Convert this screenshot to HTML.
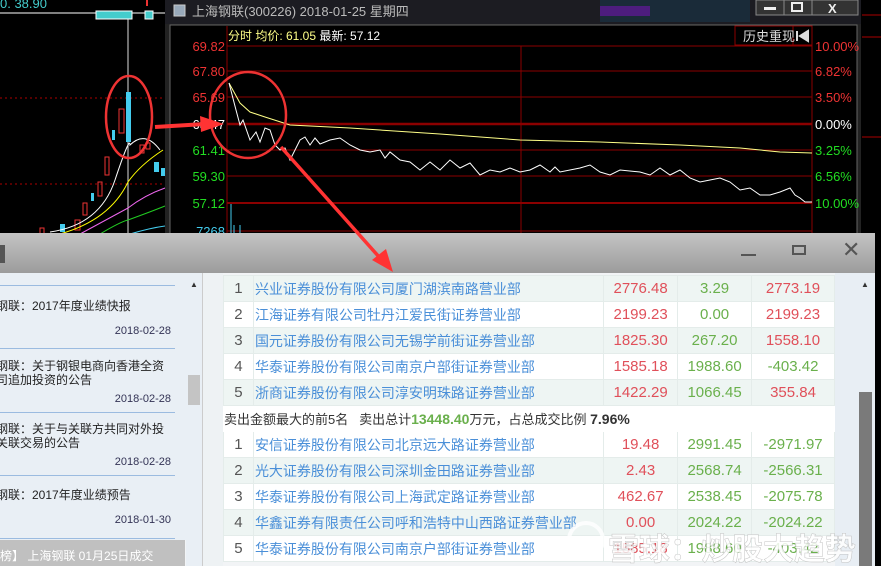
<!DOCTYPE html>
<html><head><meta charset="utf-8"><style>
*{margin:0;padding:0;box-sizing:border-box}
body{width:881px;height:566px;overflow:hidden;background:#000;position:relative;font-family:"Liberation Sans","Noto Sans CJK SC",sans-serif}
.abs{position:absolute}
table{border-collapse:collapse;position:absolute;left:223px;top:275px;width:612px;font-size:14px}
td{height:26px;border:1px solid #e4ecea;padding:0}
tr.o td{background:#eef5f3}
tr.e td{background:#fff}
td.n{width:30px;text-align:center;color:#555;font-size:15px}
td.c{width:351px;color:#4a8fd8;padding-left:1px}
td.a,td.b,td.d{width:74px;text-align:center;font-size:15px}
td.d{width:83px}
.r{color:#e0505a}.g{color:#6ab04c}
.news{position:absolute;left:-4px;width:179px;font-size:12px;color:#222}
.dt{position:absolute;right:4px;font-size:11px;color:#335}
</style></head><body>
<svg class="abs" style="left:0;top:0" width="881" height="240">
<line x1="0" y1="13" x2="165" y2="13" stroke="#fff" stroke-width="1"/>
<line x1="0" y1="98" x2="165" y2="98" stroke="#a00" stroke-dasharray="2,3"/>
<line x1="0" y1="184" x2="165" y2="184" stroke="#a00" stroke-dasharray="2,3"/>
<line x1="128" y1="14" x2="128" y2="235" stroke="#ddd"/>
<rect x="96" y="11" width="36" height="8" fill="#4cc" stroke="#fff"/>
<rect x="145" y="11" width="8" height="8" fill="#4cc" stroke="#fff"/>
<text x="0" y="8" fill="#4cc" font-size="13">0. 38.90</text>
<rect x="146" y="0" width="2" height="6" fill="#e33"/>
<rect x="119" y="109" width="5" height="24" fill="none" stroke="#e33"/>
<rect x="126" y="92" width="5" height="50" fill="#4ce"/>
<rect x="112" y="130" width="3" height="10" fill="#4ce"/>
<rect x="105" y="157" width="4" height="18" fill="none" stroke="#e33"/>
<rect x="98" y="182" width="4" height="14" fill="none" stroke="#e33"/>
<rect x="91" y="193" width="3" height="8" fill="#4ce"/>
<rect x="83" y="203" width="4" height="12" fill="none" stroke="#e33"/>
<rect x="154" y="162" width="5" height="10" fill="#4ce"/>
<rect x="161" y="168" width="4" height="8" fill="#4ce"/>
<rect x="140" y="145" width="4" height="8" fill="none" stroke="#e33"/>
<rect x="146" y="143" width="4" height="6" fill="none" stroke="#e33"/>
<rect x="60" y="224" width="5" height="8" fill="#4ce"/>
<rect x="75" y="220" width="5" height="10" fill="none" stroke="#e33"/>
<rect x="40" y="228" width="4" height="6" fill="none" stroke="#e33"/>
<path d="M50 232 Q100 225 115 180 T130 145 Q145 130 160 150" stroke="#fff" fill="none"/>
<path d="M60 234 Q110 220 128 182 Q140 165 163 150" stroke="#ff0" fill="none"/>
<path d="M80 234 Q115 215 128 208 Q145 195 165 188" stroke="#e6e" fill="none"/>
<path d="M100 234 Q120 222 128 220 Q150 212 165 206" stroke="#2c2" fill="none"/>
<path d="M130 234 Q150 228 165 226" stroke="#4ce" fill="none"/>
<rect x="165" y="0" width="696" height="240" fill="#222"/>
<rect x="165" y="0" width="696" height="24" fill="#1c1c22"/>
<rect x="600" y="0" width="150" height="22" fill="#1a3040" opacity=".8"/>
<rect x="600" y="6" width="50" height="10" fill="#5a1a90" opacity=".8"/>
<rect x="174" y="5" width="11" height="11" fill="#9ab" stroke="#ccc"/>
<text x="192" y="16" fill="#bbb" font-size="13">上海钢联(300226) 2018-01-25 星期四</text>
<rect x="756" y="0" width="28" height="15" fill="#333" stroke="#888"/>
<rect x="784" y="0" width="28" height="15" fill="#333" stroke="#888"/>
<rect x="812" y="0" width="46" height="15" fill="#333" stroke="#888"/>
<rect x="764" y="7" width="12" height="3" fill="#eee"/>
<rect x="792" y="3" width="10" height="8" fill="none" stroke="#eee" stroke-width="2"/>
<text x="828" y="13" fill="#eee" font-size="13" font-weight="bold">X</text>
<rect x="170" y="25" width="687" height="215" fill="#000" stroke="#666"/>
<g stroke="#8b0000" stroke-width="1">
<line x1="227" y1="46" x2="812" y2="46"/><line x1="227" y1="71" x2="812" y2="71"/>
<line x1="227" y1="97" x2="812" y2="97"/><line x1="227" y1="150" x2="812" y2="150"/>
<line x1="227" y1="176" x2="812" y2="176"/><line x1="227" y1="231" x2="812" y2="231"/>
<line x1="227" y1="124" x2="812" y2="124" stroke-width="2.5"/>
<line x1="227" y1="203" x2="812" y2="203" stroke-width="2"/>
<line x1="227" y1="26" x2="227" y2="240"/><line x1="521" y1="46" x2="521" y2="240"/>
<line x1="812" y1="26" x2="812" y2="240"/>
<rect x="735" y="26" width="58" height="19" fill="none"/><rect x="793" y="26" width="19" height="19" fill="none"/>
</g>
<text x="743" y="41" fill="#ddd" font-size="13">历史重现</text>
<path d="M797 31v10M808 31l-8 5 8 5z" stroke="#ddd" fill="#ddd" stroke-width="2"/>
<text x="228" y="40" fill="#ff8" font-size="12">分时 均价: 61.05 <tspan fill="#fff">最新: 57.12</tspan></text>
<g font-size="13" text-anchor="end">
<text x="225" y="51" fill="#e33">69.82</text><text x="225" y="76" fill="#e33">67.80</text>
<text x="225" y="102" fill="#e33">65.69</text><text x="225" y="129" fill="#fff">63.47</text>
<text x="225" y="155" fill="#2d2">61.41</text><text x="225" y="181" fill="#2d2">59.30</text>
<text x="225" y="208" fill="#2d2">57.12</text><text x="225" y="236" fill="#4ce">7268</text>
</g>
<g font-size="13">
<text x="815" y="51" fill="#e33">10.00%</text><text x="815" y="76" fill="#e33">6.82%</text>
<text x="815" y="102" fill="#e33">3.50%</text><text x="815" y="129" fill="#fff">0.00%</text>
<text x="815" y="155" fill="#2d2">3.25%</text><text x="815" y="181" fill="#2d2">6.56%</text>
<text x="815" y="208" fill="#2d2">10.00%</text>
</g>
<line x1="231" y1="204" x2="231" y2="235" stroke="#4ce"/><line x1="234" y1="225" x2="234" y2="235" stroke="#4ce"/><line x1="240" y1="225" x2="240" y2="235" stroke="#4ce"/>
<polyline fill="none" stroke="#ff8" points="229,83 240,103 250,112 265,117 290,125 350,128 440,134 520,140 600,142 680,145 740,148 780,152 812,153"/>
<polyline fill="none" stroke="#fff" points="229,83 236,110 240,125 243,120 250,140 256,132 260,142 265,128 270,130 275,145 280,150 285,148 290,160 295,150 300,140 305,137 310,145 315,138 320,144 330,140 340,138 350,145 360,150 370,152 380,150 385,158 390,152 400,160 410,162 420,170 430,162 440,170 450,160 460,168 470,163 480,175 490,170 500,172 510,168 520,172 530,170 540,165 550,172 555,167 560,172 580,168 590,165 600,172 610,175 620,170 640,172 650,175 660,168 670,175 680,170 690,178 700,182 710,180 720,178 730,182 740,190 750,188 760,195 770,195 780,192 790,188 795,195 800,198 805,202 812,202"/>
<rect x="861" y="0" width="20" height="240" fill="#000"/>
<line x1="862" y1="15" x2="881" y2="15" stroke="#a00"/><line x1="862" y1="37" x2="881" y2="37" stroke="#a00"/><line x1="862" y1="137" x2="881" y2="137" stroke="#a00"/>
</svg>
<div class="abs" style="left:0;top:233px;width:875px;height:333px;background:#f2f4f6"></div>
<div class="abs" style="left:0;top:233px;width:875px;height:40px;background:linear-gradient(#c4c4c4,#9c9c9c)"></div>
<div class="abs" style="left:0;top:245px;width:5px;height:18px;background:#555"></div>
<div class="abs" style="left:741px;top:254px;width:15px;height:2px;background:#555"></div>
<div class="abs" style="left:792px;top:245px;width:14px;height:10px;border:2px solid #555"></div>
<div class="abs" style="left:842px;top:237px;color:#555;font-size:22px">✕</div>
<div class="abs" style="left:0;top:273px;width:186px;height:267px;background:#e9eff5"></div>
<div class="abs" style="left:186px;top:273px;width:16px;height:293px;background:#e9eff5"></div>
<div class="abs" style="left:188px;top:375px;width:12px;height:30px;background:#c4c4c4"></div>
<div class="abs" style="left:190px;top:280px;color:#333;font-size:8px">▲</div>
<div class="abs" style="left:202px;top:273px;width:21px;height:293px;background:#eef2f4;border-left:1px solid #ccc"></div>
<div class="abs" style="left:0;top:285px;width:175px;height:1px;background:#9bbbe0"></div>
<div class="abs" style="left:0;top:348px;width:175px;height:1px;background:#9bbbe0"></div>
<div class="abs" style="left:0;top:412px;width:175px;height:1px;background:#9bbbe0"></div>
<div class="abs" style="left:0;top:475px;width:175px;height:1px;background:#9bbbe0"></div>
<div class="abs" style="left:0;top:538px;width:175px;height:1px;background:#9bbbe0"></div>
<div class="news" style="top:297px">钢联：2017年度业绩快报<span class="dt" style="top:28px">2018-02-28</span></div>
<div class="news" style="top:359px;line-height:14px">钢联：关于钢银电商向香港全资<br>司追加投资的公告<span class="dt" style="top:33px">2018-02-28</span></div>
<div class="news" style="top:422px;line-height:14px">钢联：关于与关联方共同对外投<br>关联交易的公告<span class="dt" style="top:33px">2018-02-28</span></div>
<div class="news" style="top:486px">钢联：2017年度业绩预告<span class="dt" style="top:28px">2018-01-30</span></div>
<div class="abs" style="left:0;top:540px;width:185px;height:26px;background:#c0c0c0;color:#fff;font-size:12px;padding:7px 0 0 0">榜】 上海钢联 01月25日成交</div>
<div class="abs" style="left:835px;top:273px;width:40px;height:293px;background:#e8eef4"></div>
<div class="abs" style="left:859px;top:392px;width:13px;height:174px;background:#7a7a7a"></div>
<div class="abs" style="left:861px;top:280px;color:#333;font-size:8px">▲</div>
<div class="abs" style="left:875px;top:233px;width:6px;height:333px;background:#000"></div>
<table>
<tr class="o"><td class="n">1</td><td class="c">兴业证券股份有限公司厦门湖滨南路营业部</td><td class="a r">2776.48</td><td class="b g">3.29</td><td class="d r">2773.19</td></tr>
<tr class="e"><td class="n">2</td><td class="c">江海证券有限公司牡丹江爱民街证券营业部</td><td class="a r">2199.23</td><td class="b g">0.00</td><td class="d r">2199.23</td></tr>
<tr class="o"><td class="n">3</td><td class="c">国元证券股份有限公司无锡学前街证券营业部</td><td class="a r">1825.30</td><td class="b g">267.20</td><td class="d r">1558.10</td></tr>
<tr class="e"><td class="n">4</td><td class="c">华泰证券股份有限公司南京户部街证券营业部</td><td class="a r">1585.18</td><td class="b g">1988.60</td><td class="d g">-403.42</td></tr>
<tr class="o"><td class="n">5</td><td class="c">浙商证券股份有限公司淳安明珠路证券营业部</td><td class="a r">1422.29</td><td class="b g">1066.45</td><td class="d r">355.84</td></tr>
<tr class="e"><td colspan="5" style="color:#333;font-size:13px;border-color:#fff">卖出金额最大的前5名 &nbsp; 卖出总计<b class="g" style="font-size:14px">13448.40</b>万元，占总成交比例 <b style="font-size:14px">7.96%</b></td></tr>
<tr class="e"><td class="n">1</td><td class="c">安信证券股份有限公司北京远大路证券营业部</td><td class="a r">19.48</td><td class="b g">2991.45</td><td class="d g">-2971.97</td></tr>
<tr class="o"><td class="n">2</td><td class="c">光大证券股份有限公司深圳金田路证券营业部</td><td class="a r">2.43</td><td class="b g">2568.74</td><td class="d g">-2566.31</td></tr>
<tr class="e"><td class="n">3</td><td class="c">华泰证券股份有限公司上海武定路证券营业部</td><td class="a r">462.67</td><td class="b g">2538.45</td><td class="d g">-2075.78</td></tr>
<tr class="o"><td class="n">4</td><td class="c">华鑫证券有限责任公司呼和浩特中山西路证券营业部</td><td class="a r">0.00</td><td class="b g">2024.22</td><td class="d g">-2024.22</td></tr>
<tr class="e"><td class="n">5</td><td class="c">华泰证券股份有限公司南京户部街证券营业部</td><td class="a r">1585.18</td><td class="b g">1988.60</td><td class="d g">-403.42</td></tr>
</table>
<svg class="abs" style="left:0;top:0" width="881" height="566">
<ellipse cx="129" cy="117" rx="23" ry="41" fill="none" stroke="#e33" stroke-width="2.5"/>
<ellipse cx="248" cy="115" rx="38" ry="43" fill="none" stroke="#e33" stroke-width="2.5"/>
<path d="M155 127 L205 124" stroke="#f33" stroke-width="4"/>
<path d="M200 116 L224 124 L201 132z" fill="#f33"/>
<path d="M281 147 L380 258" stroke="#f33" stroke-width="3.5"/>
<path d="M372 260 L393 272 L386 249z" fill="#f33"/>
<g opacity=".85">
<circle cx="586" cy="540" r="17" fill="none" stroke="#fff" stroke-width="4"/>
<text x="608" y="560" fill="#fff" font-size="31" font-weight="bold" stroke="#bbb" stroke-width=".5">雪球：炒股大趋势</text>
</g>
</svg>
</body></html>
